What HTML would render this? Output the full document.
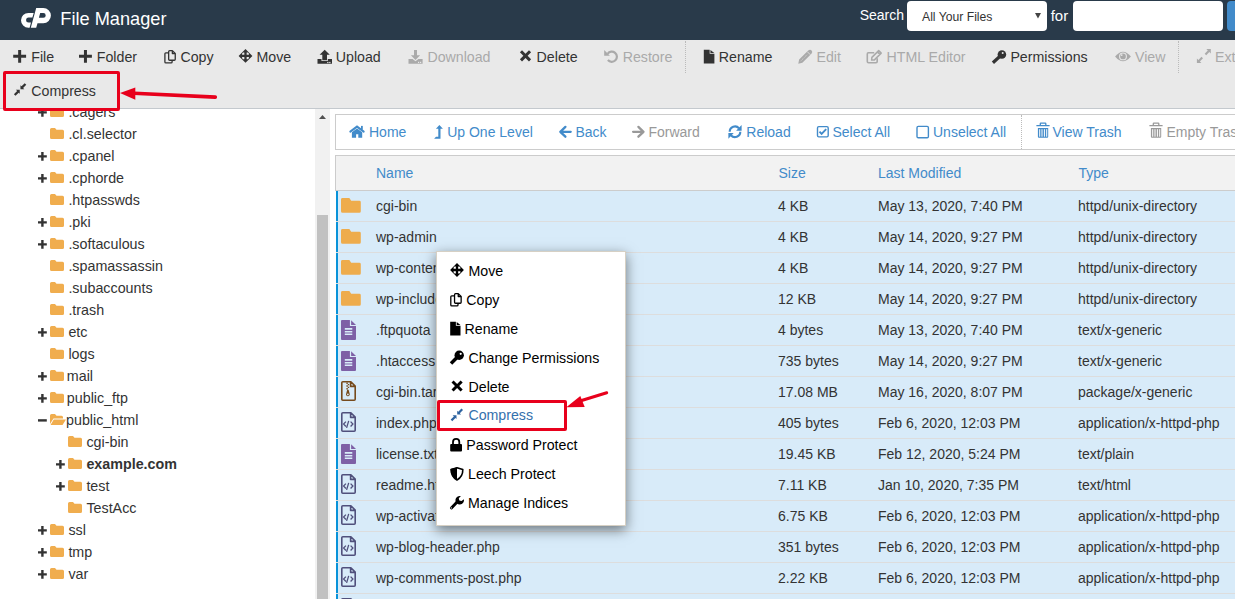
<!DOCTYPE html><html><head><meta charset="utf-8"><style>
html,body{margin:0;padding:0}
body{width:1235px;height:599px;overflow:hidden;position:relative;font-family:"Liberation Sans",sans-serif;background:#fff}
.t{position:absolute;white-space:nowrap;line-height:1}
.i{position:absolute;overflow:visible}
.abs{position:absolute}
</style></head><body>
<svg class="i" style="left:38px;top:108.0px;width:8.8px;height:8.8px;color:#333" viewBox="0 0 8.8 8.8" fill="#333"><path d="M3.2 0h2.4v3.2h3.2v2.4H5.6v3.2H3.2V5.6H0V3.2h3.2z"/></svg>
<svg class="i" style="left:49.7px;top:106.0px;width:14px;height:11px;color:#f0ad4e" viewBox="0 0 14 11" fill="#f0ad4e"><path d="M0 1.5Q0 0 1.5 0H5l1.5 1.8H12.5Q14 1.8 14 3.3V9.5Q14 11 12.5 11H1.5Q0 11 0 9.5z"/></svg>
<span class="t" style="left:68.40px;top:105.10px;font-size:14.3px;color:#333;font-weight:normal;">.cagers</span>
<svg class="i" style="left:49.7px;top:127.99999999999999px;width:14px;height:11px;color:#f0ad4e" viewBox="0 0 14 11" fill="#f0ad4e"><path d="M0 1.5Q0 0 1.5 0H5l1.5 1.8H12.5Q14 1.8 14 3.3V9.5Q14 11 12.5 11H1.5Q0 11 0 9.5z"/></svg>
<span class="t" style="left:68.40px;top:127.10px;font-size:14.3px;color:#333;font-weight:normal;">.cl.selector</span>
<svg class="i" style="left:38px;top:152.0px;width:8.8px;height:8.8px;color:#333" viewBox="0 0 8.8 8.8" fill="#333"><path d="M3.2 0h2.4v3.2h3.2v2.4H5.6v3.2H3.2V5.6H0V3.2h3.2z"/></svg>
<svg class="i" style="left:49.7px;top:150.0px;width:14px;height:11px;color:#f0ad4e" viewBox="0 0 14 11" fill="#f0ad4e"><path d="M0 1.5Q0 0 1.5 0H5l1.5 1.8H12.5Q14 1.8 14 3.3V9.5Q14 11 12.5 11H1.5Q0 11 0 9.5z"/></svg>
<span class="t" style="left:68.40px;top:149.10px;font-size:14.3px;color:#333;font-weight:normal;">.cpanel</span>
<svg class="i" style="left:38px;top:174.0px;width:8.8px;height:8.8px;color:#333" viewBox="0 0 8.8 8.8" fill="#333"><path d="M3.2 0h2.4v3.2h3.2v2.4H5.6v3.2H3.2V5.6H0V3.2h3.2z"/></svg>
<svg class="i" style="left:49.7px;top:172.0px;width:14px;height:11px;color:#f0ad4e" viewBox="0 0 14 11" fill="#f0ad4e"><path d="M0 1.5Q0 0 1.5 0H5l1.5 1.8H12.5Q14 1.8 14 3.3V9.5Q14 11 12.5 11H1.5Q0 11 0 9.5z"/></svg>
<span class="t" style="left:68.40px;top:171.10px;font-size:14.3px;color:#333;font-weight:normal;">.cphorde</span>
<svg class="i" style="left:49.7px;top:194.0px;width:14px;height:11px;color:#f0ad4e" viewBox="0 0 14 11" fill="#f0ad4e"><path d="M0 1.5Q0 0 1.5 0H5l1.5 1.8H12.5Q14 1.8 14 3.3V9.5Q14 11 12.5 11H1.5Q0 11 0 9.5z"/></svg>
<span class="t" style="left:68.40px;top:193.10px;font-size:14.3px;color:#333;font-weight:normal;">.htpasswds</span>
<svg class="i" style="left:38px;top:218.0px;width:8.8px;height:8.8px;color:#333" viewBox="0 0 8.8 8.8" fill="#333"><path d="M3.2 0h2.4v3.2h3.2v2.4H5.6v3.2H3.2V5.6H0V3.2h3.2z"/></svg>
<svg class="i" style="left:49.7px;top:216.0px;width:14px;height:11px;color:#f0ad4e" viewBox="0 0 14 11" fill="#f0ad4e"><path d="M0 1.5Q0 0 1.5 0H5l1.5 1.8H12.5Q14 1.8 14 3.3V9.5Q14 11 12.5 11H1.5Q0 11 0 9.5z"/></svg>
<span class="t" style="left:68.40px;top:215.10px;font-size:14.3px;color:#333;font-weight:normal;">.pki</span>
<svg class="i" style="left:38px;top:240.0px;width:8.8px;height:8.8px;color:#333" viewBox="0 0 8.8 8.8" fill="#333"><path d="M3.2 0h2.4v3.2h3.2v2.4H5.6v3.2H3.2V5.6H0V3.2h3.2z"/></svg>
<svg class="i" style="left:49.7px;top:238.0px;width:14px;height:11px;color:#f0ad4e" viewBox="0 0 14 11" fill="#f0ad4e"><path d="M0 1.5Q0 0 1.5 0H5l1.5 1.8H12.5Q14 1.8 14 3.3V9.5Q14 11 12.5 11H1.5Q0 11 0 9.5z"/></svg>
<span class="t" style="left:68.40px;top:237.10px;font-size:14.3px;color:#333;font-weight:normal;">.softaculous</span>
<svg class="i" style="left:49.7px;top:260.0px;width:14px;height:11px;color:#f0ad4e" viewBox="0 0 14 11" fill="#f0ad4e"><path d="M0 1.5Q0 0 1.5 0H5l1.5 1.8H12.5Q14 1.8 14 3.3V9.5Q14 11 12.5 11H1.5Q0 11 0 9.5z"/></svg>
<span class="t" style="left:68.40px;top:259.10px;font-size:14.3px;color:#333;font-weight:normal;">.spamassassin</span>
<svg class="i" style="left:49.7px;top:282.0px;width:14px;height:11px;color:#f0ad4e" viewBox="0 0 14 11" fill="#f0ad4e"><path d="M0 1.5Q0 0 1.5 0H5l1.5 1.8H12.5Q14 1.8 14 3.3V9.5Q14 11 12.5 11H1.5Q0 11 0 9.5z"/></svg>
<span class="t" style="left:68.40px;top:281.10px;font-size:14.3px;color:#333;font-weight:normal;">.subaccounts</span>
<svg class="i" style="left:49.7px;top:304.0px;width:14px;height:11px;color:#f0ad4e" viewBox="0 0 14 11" fill="#f0ad4e"><path d="M0 1.5Q0 0 1.5 0H5l1.5 1.8H12.5Q14 1.8 14 3.3V9.5Q14 11 12.5 11H1.5Q0 11 0 9.5z"/></svg>
<span class="t" style="left:68.40px;top:303.10px;font-size:14.3px;color:#333;font-weight:normal;">.trash</span>
<svg class="i" style="left:38px;top:328.0px;width:8.8px;height:8.8px;color:#333" viewBox="0 0 8.8 8.8" fill="#333"><path d="M3.2 0h2.4v3.2h3.2v2.4H5.6v3.2H3.2V5.6H0V3.2h3.2z"/></svg>
<svg class="i" style="left:49.7px;top:326.0px;width:14px;height:11px;color:#f0ad4e" viewBox="0 0 14 11" fill="#f0ad4e"><path d="M0 1.5Q0 0 1.5 0H5l1.5 1.8H12.5Q14 1.8 14 3.3V9.5Q14 11 12.5 11H1.5Q0 11 0 9.5z"/></svg>
<span class="t" style="left:68.40px;top:325.10px;font-size:14.3px;color:#333;font-weight:normal;">etc</span>
<svg class="i" style="left:49.7px;top:348.0px;width:14px;height:11px;color:#f0ad4e" viewBox="0 0 14 11" fill="#f0ad4e"><path d="M0 1.5Q0 0 1.5 0H5l1.5 1.8H12.5Q14 1.8 14 3.3V9.5Q14 11 12.5 11H1.5Q0 11 0 9.5z"/></svg>
<span class="t" style="left:68.40px;top:347.10px;font-size:14.3px;color:#333;font-weight:normal;">logs</span>
<svg class="i" style="left:38px;top:372.0px;width:8.8px;height:8.8px;color:#333" viewBox="0 0 8.8 8.8" fill="#333"><path d="M3.2 0h2.4v3.2h3.2v2.4H5.6v3.2H3.2V5.6H0V3.2h3.2z"/></svg>
<svg class="i" style="left:49.7px;top:370.0px;width:14px;height:11px;color:#f0ad4e" viewBox="0 0 14 11" fill="#f0ad4e"><path d="M0 1.5Q0 0 1.5 0H5l1.5 1.8H12.5Q14 1.8 14 3.3V9.5Q14 11 12.5 11H1.5Q0 11 0 9.5z"/></svg>
<span class="t" style="left:66.80px;top:369.10px;font-size:14.3px;color:#333;font-weight:normal;">mail</span>
<svg class="i" style="left:38px;top:394.0px;width:8.8px;height:8.8px;color:#333" viewBox="0 0 8.8 8.8" fill="#333"><path d="M3.2 0h2.4v3.2h3.2v2.4H5.6v3.2H3.2V5.6H0V3.2h3.2z"/></svg>
<svg class="i" style="left:49.7px;top:392.0px;width:14px;height:11px;color:#f0ad4e" viewBox="0 0 14 11" fill="#f0ad4e"><path d="M0 1.5Q0 0 1.5 0H5l1.5 1.8H12.5Q14 1.8 14 3.3V9.5Q14 11 12.5 11H1.5Q0 11 0 9.5z"/></svg>
<span class="t" style="left:66.80px;top:391.10px;font-size:14.3px;color:#333;font-weight:normal;">public_ftp</span>
<svg class="i" style="left:38px;top:416.0px;width:8.8px;height:8.8px;color:#333" viewBox="0 0 8.8 8.8" fill="#333"><path d="M0 3.2h8.8v2.4H0z"/></svg>
<svg class="i" style="left:50px;top:414.0px;width:16px;height:11px;color:#f0ad4e" viewBox="0 0 16 11" fill="#f0ad4e"><path d="M0 1.5Q0 0 1.5 0H5l1.5 1.8H11.5Q13 1.8 13 3.3V4.5H3.5L0 10z M3.8 5.5H16L12.5 11H0.5z"/></svg>
<span class="t" style="left:66.00px;top:413.10px;font-size:14.3px;color:#333;font-weight:normal;">public_html</span>
<svg class="i" style="left:67.7px;top:436.0px;width:14px;height:11px;color:#f0ad4e" viewBox="0 0 14 11" fill="#f0ad4e"><path d="M0 1.5Q0 0 1.5 0H5l1.5 1.8H12.5Q14 1.8 14 3.3V9.5Q14 11 12.5 11H1.5Q0 11 0 9.5z"/></svg>
<span class="t" style="left:86.40px;top:435.10px;font-size:14.3px;color:#333;font-weight:normal;">cgi-bin</span>
<svg class="i" style="left:56px;top:460.0px;width:8.8px;height:8.8px;color:#333" viewBox="0 0 8.8 8.8" fill="#333"><path d="M3.2 0h2.4v3.2h3.2v2.4H5.6v3.2H3.2V5.6H0V3.2h3.2z"/></svg>
<svg class="i" style="left:67.7px;top:458.0px;width:14px;height:11px;color:#f0ad4e" viewBox="0 0 14 11" fill="#f0ad4e"><path d="M0 1.5Q0 0 1.5 0H5l1.5 1.8H12.5Q14 1.8 14 3.3V9.5Q14 11 12.5 11H1.5Q0 11 0 9.5z"/></svg>
<span class="t" style="left:86.40px;top:457.10px;font-size:14.3px;color:#333;font-weight:bold;">example.com</span>
<svg class="i" style="left:56px;top:482.0px;width:8.8px;height:8.8px;color:#333" viewBox="0 0 8.8 8.8" fill="#333"><path d="M3.2 0h2.4v3.2h3.2v2.4H5.6v3.2H3.2V5.6H0V3.2h3.2z"/></svg>
<svg class="i" style="left:67.7px;top:480.0px;width:14px;height:11px;color:#f0ad4e" viewBox="0 0 14 11" fill="#f0ad4e"><path d="M0 1.5Q0 0 1.5 0H5l1.5 1.8H12.5Q14 1.8 14 3.3V9.5Q14 11 12.5 11H1.5Q0 11 0 9.5z"/></svg>
<span class="t" style="left:86.40px;top:479.10px;font-size:14.3px;color:#333;font-weight:normal;">test</span>
<svg class="i" style="left:67.7px;top:502.00000000000006px;width:14px;height:11px;color:#f0ad4e" viewBox="0 0 14 11" fill="#f0ad4e"><path d="M0 1.5Q0 0 1.5 0H5l1.5 1.8H12.5Q14 1.8 14 3.3V9.5Q14 11 12.5 11H1.5Q0 11 0 9.5z"/></svg>
<span class="t" style="left:86.40px;top:501.10px;font-size:14.3px;color:#333;font-weight:normal;">TestAcc</span>
<svg class="i" style="left:38px;top:526.0px;width:8.8px;height:8.8px;color:#333" viewBox="0 0 8.8 8.8" fill="#333"><path d="M3.2 0h2.4v3.2h3.2v2.4H5.6v3.2H3.2V5.6H0V3.2h3.2z"/></svg>
<svg class="i" style="left:49.7px;top:524.0px;width:14px;height:11px;color:#f0ad4e" viewBox="0 0 14 11" fill="#f0ad4e"><path d="M0 1.5Q0 0 1.5 0H5l1.5 1.8H12.5Q14 1.8 14 3.3V9.5Q14 11 12.5 11H1.5Q0 11 0 9.5z"/></svg>
<span class="t" style="left:68.40px;top:523.10px;font-size:14.3px;color:#333;font-weight:normal;">ssl</span>
<svg class="i" style="left:38px;top:548.0px;width:8.8px;height:8.8px;color:#333" viewBox="0 0 8.8 8.8" fill="#333"><path d="M3.2 0h2.4v3.2h3.2v2.4H5.6v3.2H3.2V5.6H0V3.2h3.2z"/></svg>
<svg class="i" style="left:49.7px;top:546.0px;width:14px;height:11px;color:#f0ad4e" viewBox="0 0 14 11" fill="#f0ad4e"><path d="M0 1.5Q0 0 1.5 0H5l1.5 1.8H12.5Q14 1.8 14 3.3V9.5Q14 11 12.5 11H1.5Q0 11 0 9.5z"/></svg>
<span class="t" style="left:68.40px;top:545.10px;font-size:14.3px;color:#333;font-weight:normal;">tmp</span>
<svg class="i" style="left:38px;top:570.0px;width:8.8px;height:8.8px;color:#333" viewBox="0 0 8.8 8.8" fill="#333"><path d="M3.2 0h2.4v3.2h3.2v2.4H5.6v3.2H3.2V5.6H0V3.2h3.2z"/></svg>
<svg class="i" style="left:49.7px;top:568.0px;width:14px;height:11px;color:#f0ad4e" viewBox="0 0 14 11" fill="#f0ad4e"><path d="M0 1.5Q0 0 1.5 0H5l1.5 1.8H12.5Q14 1.8 14 3.3V9.5Q14 11 12.5 11H1.5Q0 11 0 9.5z"/></svg>
<span class="t" style="left:68.40px;top:567.10px;font-size:14.3px;color:#333;font-weight:normal;">var</span>
<div class="abs" style="left:315px;top:109px;width:15px;height:490px;background:#f1f1f1"></div>
<svg class="i" style="left:319px;top:114.8px;width:7px;height:4px" viewBox="0 0 7 4" fill="#505050"><path d="M0 4L3.5 0 7 4z"/></svg>
<div class="abs" style="left:317px;top:215px;width:11px;height:384px;background:#c1c1c1"></div>
<div class="abs" style="left:335px;top:114px;width:1000px;height:34px;border:1px solid #ccc;background:#fff"></div>
<span class="t" style="left:369.00px;top:124.85px;font-size:14px;color:#428bca;font-weight:normal;">Home</span>
<span class="t" style="left:447.20px;top:124.85px;font-size:14px;color:#428bca;font-weight:normal;">Up One Level</span>
<span class="t" style="left:575.50px;top:124.85px;font-size:14px;color:#428bca;font-weight:normal;">Back</span>
<span class="t" style="left:648.40px;top:124.85px;font-size:14px;color:#999;font-weight:normal;">Forward</span>
<span class="t" style="left:746.30px;top:124.85px;font-size:14px;color:#428bca;font-weight:normal;">Reload</span>
<span class="t" style="left:832.50px;top:124.85px;font-size:14px;color:#428bca;font-weight:normal;">Select All</span>
<span class="t" style="left:933.00px;top:124.85px;font-size:14px;color:#428bca;font-weight:normal;">Unselect All</span>
<div class="abs" style="left:1021px;top:115px;width:0;height:34px;border-left:1px dotted #bbb"></div>
<span class="t" style="left:1052.50px;top:124.85px;font-size:14px;color:#428bca;font-weight:normal;">View Trash</span>
<span class="t" style="left:1166.40px;top:124.85px;font-size:14px;color:#999;font-weight:normal;">Empty Trash</span>
<svg class="i" style="left:0;top:0;width:1235px;height:599px" viewBox="0 0 1235 599"><path fill="none" stroke="#428bca" stroke-width="2" stroke-linecap="round" d="M350.30 131.60L357.00 126.60L363.70 131.60"/><rect fill="#428bca" x="361.00" y="125.90" width="1.8" height="3.8"/><path fill="#428bca" d="M351.90 132.30L357.00 128.50L362.20 132.30V137.80H358.30V134.20H356.10V137.80H351.90Z"/><path fill="#428bca" d="M439.40 125.10L442.90 128.80H440.50V138.75H434.10L436.00 136.70H438.30V128.80H435.90Z"/><path fill="none" stroke="#428bca" stroke-width="2.3" stroke-linecap="round" stroke-linejoin="round" d="M565.40 126.90L560.30 131.80L565.40 136.70M560.50 131.80H570.70"/><path fill="none" stroke="#999" stroke-width="2.3" stroke-linecap="round" stroke-linejoin="round" d="M638.40 126.90L643.50 131.80L638.40 136.70M643.30 131.80H633.10"/><path fill="none" stroke="#428bca" stroke-width="2.1" d="M729.70 131.80A5.3 5.3 0 0 1 739.06 128.39"/><path fill="none" stroke="#428bca" stroke-width="2.1" d="M740.30 131.80A5.3 5.3 0 0 1 730.94 135.21"/><path fill="#428bca" d="M741.60 130.70H736.10L741.60 125.10Z"/><path fill="#428bca" d="M728.40 132.90H733.70L728.40 138.75Z"/><rect fill="none" stroke="#428bca" stroke-width="1.4" x="817.50" y="126.60" width="10.7" height="10.3" rx="1.3"/><path fill="none" stroke="#428bca" stroke-width="1.9" d="M819.50 131.70L821.60 133.90L826.20 129.20"/><rect fill="none" stroke="#428bca" stroke-width="1.4" x="917.00" y="126.40" width="11.4" height="11.4" rx="1.3"/><path fill="none" stroke="#428bca" stroke-width="1.3" d="M1036.40 125.60H1049.60M1040.30 125.60V123.70Q1040.30 123.10 1040.90 123.10H1045.20Q1045.80 123.10 1045.80 123.70V125.60"/><path fill="#428bca" d="M1037.90 127.90H1048.20V136.80Q1048.20 137.80 1047.20 137.80H1038.90Q1037.90 137.80 1037.90 136.80Z"/><rect fill="#fff" x="1039.20" y="129.20" width="1.0" height="7.5"/><rect fill="#fff" x="1041.50" y="129.20" width="1.0" height="7.5"/><rect fill="#fff" x="1043.90" y="129.20" width="1.0" height="7.5"/><rect fill="#fff" x="1046.20" y="129.20" width="1.0" height="7.5"/><path fill="none" stroke="#999" stroke-width="1.3" d="M1149.40 125.60H1162.60M1153.30 125.60V123.70Q1153.30 123.10 1153.90 123.10H1158.20Q1158.80 123.10 1158.80 123.70V125.60"/><path fill="#999" d="M1150.90 127.90H1161.20V136.80Q1161.20 137.80 1160.20 137.80H1151.90Q1150.90 137.80 1150.90 136.80Z"/><rect fill="#fff" x="1152.20" y="129.20" width="1.0" height="7.5"/><rect fill="#fff" x="1154.50" y="129.20" width="1.0" height="7.5"/><rect fill="#fff" x="1156.90" y="129.20" width="1.0" height="7.5"/><rect fill="#fff" x="1159.20" y="129.20" width="1.0" height="7.5"/></svg>
<div class="abs" style="left:335px;top:155px;width:1000px;height:34px;background:#f2f2f2;border:1px solid #ccc;border-bottom:1px solid #ccc"></div>
<span class="t" style="left:376.00px;top:165.95px;font-size:14px;color:#428bca;font-weight:normal;">Name</span>
<span class="t" style="left:778.50px;top:165.95px;font-size:14px;color:#428bca;font-weight:normal;">Size</span>
<span class="t" style="left:878.00px;top:165.95px;font-size:14px;color:#428bca;font-weight:normal;">Last Modified</span>
<span class="t" style="left:1078.50px;top:165.95px;font-size:14px;color:#428bca;font-weight:normal;">Type</span>
<div class="abs" style="left:336px;top:191px;width:1000px;height:30px;background:#d8ebf9;border-bottom:1px solid #ddd"></div>
<div class="abs" style="left:336px;top:191px;width:2px;height:30px;background:#0993d9"></div>
<svg class="i" style="left:341px;top:198px;width:19.8px;height:14.8px;color:#eeac4c" viewBox="0 0 19.8 14.8" fill="#eeac4c"><path d="M0 1.5Q0 0 1.5 0H8.35L10.2 2.7H18.3Q19.8 2.7 19.8 4.2V13.3Q19.8 14.8 18.3 14.8H1.5Q0 14.8 0 13.3z"/></svg>
<span class="t" style="left:376.00px;top:198.95px;font-size:14px;color:#333;font-weight:normal;">cgi-bin</span>
<span class="t" style="left:778.00px;top:198.95px;font-size:14px;color:#333;font-weight:normal;">4 KB</span>
<span class="t" style="left:878.00px;top:198.95px;font-size:14px;color:#333;font-weight:normal;">May 13, 2020, 7:40 PM</span>
<span class="t" style="left:1078.00px;top:198.95px;font-size:14px;color:#333;font-weight:normal;">httpd/unix-directory</span>
<div class="abs" style="left:336px;top:222px;width:1000px;height:30px;background:#d8ebf9;border-bottom:1px solid #ddd"></div>
<div class="abs" style="left:336px;top:222px;width:2px;height:30px;background:#0993d9"></div>
<svg class="i" style="left:341px;top:229px;width:19.8px;height:14.8px;color:#eeac4c" viewBox="0 0 19.8 14.8" fill="#eeac4c"><path d="M0 1.5Q0 0 1.5 0H8.35L10.2 2.7H18.3Q19.8 2.7 19.8 4.2V13.3Q19.8 14.8 18.3 14.8H1.5Q0 14.8 0 13.3z"/></svg>
<span class="t" style="left:376.00px;top:229.95px;font-size:14px;color:#333;font-weight:normal;">wp-admin</span>
<span class="t" style="left:778.00px;top:229.95px;font-size:14px;color:#333;font-weight:normal;">4 KB</span>
<span class="t" style="left:878.00px;top:229.95px;font-size:14px;color:#333;font-weight:normal;">May 14, 2020, 9:27 PM</span>
<span class="t" style="left:1078.00px;top:229.95px;font-size:14px;color:#333;font-weight:normal;">httpd/unix-directory</span>
<div class="abs" style="left:336px;top:253px;width:1000px;height:30px;background:#d8ebf9;border-bottom:1px solid #ddd"></div>
<div class="abs" style="left:336px;top:253px;width:2px;height:30px;background:#0993d9"></div>
<svg class="i" style="left:341px;top:260px;width:19.8px;height:14.8px;color:#eeac4c" viewBox="0 0 19.8 14.8" fill="#eeac4c"><path d="M0 1.5Q0 0 1.5 0H8.35L10.2 2.7H18.3Q19.8 2.7 19.8 4.2V13.3Q19.8 14.8 18.3 14.8H1.5Q0 14.8 0 13.3z"/></svg>
<span class="t" style="left:376.00px;top:260.95px;font-size:14px;color:#333;font-weight:normal;">wp-content</span>
<span class="t" style="left:778.00px;top:260.95px;font-size:14px;color:#333;font-weight:normal;">4 KB</span>
<span class="t" style="left:878.00px;top:260.95px;font-size:14px;color:#333;font-weight:normal;">May 14, 2020, 9:27 PM</span>
<span class="t" style="left:1078.00px;top:260.95px;font-size:14px;color:#333;font-weight:normal;">httpd/unix-directory</span>
<div class="abs" style="left:336px;top:284px;width:1000px;height:30px;background:#d8ebf9;border-bottom:1px solid #ddd"></div>
<div class="abs" style="left:336px;top:284px;width:2px;height:30px;background:#0993d9"></div>
<svg class="i" style="left:341px;top:291px;width:19.8px;height:14.8px;color:#eeac4c" viewBox="0 0 19.8 14.8" fill="#eeac4c"><path d="M0 1.5Q0 0 1.5 0H8.35L10.2 2.7H18.3Q19.8 2.7 19.8 4.2V13.3Q19.8 14.8 18.3 14.8H1.5Q0 14.8 0 13.3z"/></svg>
<span class="t" style="left:376.00px;top:291.95px;font-size:14px;color:#333;font-weight:normal;">wp-includes</span>
<span class="t" style="left:778.00px;top:291.95px;font-size:14px;color:#333;font-weight:normal;">12 KB</span>
<span class="t" style="left:878.00px;top:291.95px;font-size:14px;color:#333;font-weight:normal;">May 14, 2020, 9:27 PM</span>
<span class="t" style="left:1078.00px;top:291.95px;font-size:14px;color:#333;font-weight:normal;">httpd/unix-directory</span>
<div class="abs" style="left:336px;top:315px;width:1000px;height:30px;background:#d8ebf9;border-bottom:1px solid #ddd"></div>
<div class="abs" style="left:336px;top:315px;width:2px;height:30px;background:#0993d9"></div>
<svg class="i" style="left:341px;top:319.7px;width:15px;height:20.1px;color:#7e60a6" viewBox="0 0 15 20.1" fill="#7e60a6"><path d="M0 1Q0 0 1 0H8.9V5.9H15V19.1Q15 20.1 14 20.1H1Q0 20.1 0 19.1z"/><path d="M10.1 0.3L15 4.9H10.1z"/><path d="M3.8 8.9h7.5M3.8 11.7h7.5M3.8 14.3h7.5" stroke="#d8ebf9" stroke-width="1.6"/></svg>
<span class="t" style="left:376.00px;top:322.95px;font-size:14px;color:#333;font-weight:normal;">.ftpquota</span>
<span class="t" style="left:778.00px;top:322.95px;font-size:14px;color:#333;font-weight:normal;">4 bytes</span>
<span class="t" style="left:878.00px;top:322.95px;font-size:14px;color:#333;font-weight:normal;">May 13, 2020, 7:40 PM</span>
<span class="t" style="left:1078.00px;top:322.95px;font-size:14px;color:#333;font-weight:normal;">text/x-generic</span>
<div class="abs" style="left:336px;top:346px;width:1000px;height:30px;background:#d8ebf9;border-bottom:1px solid #ddd"></div>
<div class="abs" style="left:336px;top:346px;width:2px;height:30px;background:#0993d9"></div>
<svg class="i" style="left:341px;top:350.7px;width:15px;height:20.1px;color:#7e60a6" viewBox="0 0 15 20.1" fill="#7e60a6"><path d="M0 1Q0 0 1 0H8.9V5.9H15V19.1Q15 20.1 14 20.1H1Q0 20.1 0 19.1z"/><path d="M10.1 0.3L15 4.9H10.1z"/><path d="M3.8 8.9h7.5M3.8 11.7h7.5M3.8 14.3h7.5" stroke="#d8ebf9" stroke-width="1.6"/></svg>
<span class="t" style="left:376.00px;top:353.95px;font-size:14px;color:#333;font-weight:normal;">.htaccess</span>
<span class="t" style="left:778.00px;top:353.95px;font-size:14px;color:#333;font-weight:normal;">735 bytes</span>
<span class="t" style="left:878.00px;top:353.95px;font-size:14px;color:#333;font-weight:normal;">May 14, 2020, 9:27 PM</span>
<span class="t" style="left:1078.00px;top:353.95px;font-size:14px;color:#333;font-weight:normal;">text/x-generic</span>
<div class="abs" style="left:336px;top:377px;width:1000px;height:30px;background:#d8ebf9;border-bottom:1px solid #ddd"></div>
<div class="abs" style="left:336px;top:377px;width:2px;height:30px;background:#0993d9"></div>
<svg class="i" style="left:341px;top:380.9px;width:15px;height:20.1px;color:#764a1c" viewBox="0 0 15 20.1" fill="#764a1c"><path fill="none" stroke="currentColor" stroke-width="1.6" stroke-linejoin="round" d="M1.8 0.8H9.9L14.2 5.1V18.3Q14.2 19.3 13.2 19.3H1.8Q0.8 19.3 0.8 18.3V1.8Q0.8 0.8 1.8 0.8z M9.6 0.8V5.4H14.2"/><path d="M5.4 1.5h1.4v1.4H5.4zM6.8 2.9h1.4v1.4H6.8zM5.4 4.3h1.4v1.4H5.4zM6.8 5.7h1.4v1.4H6.8zM5.4 7.1h1.4v1.4H5.4zM6.2 8.8h1.4L8.6 12.5A1.9 1.9 0 1 1 5.2 12.5z"/><circle cx="6.9" cy="13.4" r="0.9" fill="#d8ebf9"/></svg>
<span class="t" style="left:376.00px;top:384.95px;font-size:14px;color:#333;font-weight:normal;">cgi-bin.tar.gz</span>
<span class="t" style="left:778.00px;top:384.95px;font-size:14px;color:#333;font-weight:normal;">17.08 MB</span>
<span class="t" style="left:878.00px;top:384.95px;font-size:14px;color:#333;font-weight:normal;">May 16, 2020, 8:07 PM</span>
<span class="t" style="left:1078.00px;top:384.95px;font-size:14px;color:#333;font-weight:normal;">package/x-generic</span>
<div class="abs" style="left:336px;top:408px;width:1000px;height:30px;background:#d8ebf9;border-bottom:1px solid #ddd"></div>
<div class="abs" style="left:336px;top:408px;width:2px;height:30px;background:#0993d9"></div>
<svg class="i" style="left:341px;top:411.9px;width:15px;height:20.1px;color:#50507c" viewBox="0 0 15 20.1" fill="#50507c"><path fill="none" stroke="currentColor" stroke-width="1.6" stroke-linejoin="round" d="M1.8 0.8H9.9L14.2 5.1V18.3Q14.2 19.3 13.2 19.3H1.8Q0.8 19.3 0.8 18.3V1.8Q0.8 0.8 1.8 0.8z M9.6 0.8V5.4H14.2"/><path fill="none" stroke="currentColor" stroke-width="1.3" d="M4.9 9.6L2.6 12.05 4.9 14.5M9.6 9.6L11.9 12.05 9.6 14.5M7.7 8.9L5.6 15.9"/></svg>
<span class="t" style="left:376.00px;top:415.95px;font-size:14px;color:#333;font-weight:normal;">index.php</span>
<span class="t" style="left:778.00px;top:415.95px;font-size:14px;color:#333;font-weight:normal;">405 bytes</span>
<span class="t" style="left:878.00px;top:415.95px;font-size:14px;color:#333;font-weight:normal;">Feb 6, 2020, 12:03 PM</span>
<span class="t" style="left:1078.00px;top:415.95px;font-size:14px;color:#333;font-weight:normal;">application/x-httpd-php</span>
<div class="abs" style="left:336px;top:439px;width:1000px;height:30px;background:#d8ebf9;border-bottom:1px solid #ddd"></div>
<div class="abs" style="left:336px;top:439px;width:2px;height:30px;background:#0993d9"></div>
<svg class="i" style="left:341px;top:443.7px;width:15px;height:20.1px;color:#7e60a6" viewBox="0 0 15 20.1" fill="#7e60a6"><path d="M0 1Q0 0 1 0H8.9V5.9H15V19.1Q15 20.1 14 20.1H1Q0 20.1 0 19.1z"/><path d="M10.1 0.3L15 4.9H10.1z"/><path d="M3.8 8.9h7.5M3.8 11.7h7.5M3.8 14.3h7.5" stroke="#d8ebf9" stroke-width="1.6"/></svg>
<span class="t" style="left:376.00px;top:446.95px;font-size:14px;color:#333;font-weight:normal;">license.txt</span>
<span class="t" style="left:778.00px;top:446.95px;font-size:14px;color:#333;font-weight:normal;">19.45 KB</span>
<span class="t" style="left:878.00px;top:446.95px;font-size:14px;color:#333;font-weight:normal;">Feb 12, 2020, 5:24 PM</span>
<span class="t" style="left:1078.00px;top:446.95px;font-size:14px;color:#333;font-weight:normal;">text/plain</span>
<div class="abs" style="left:336px;top:470px;width:1000px;height:30px;background:#d8ebf9;border-bottom:1px solid #ddd"></div>
<div class="abs" style="left:336px;top:470px;width:2px;height:30px;background:#0993d9"></div>
<svg class="i" style="left:341px;top:473.9px;width:15px;height:20.1px;color:#50507c" viewBox="0 0 15 20.1" fill="#50507c"><path fill="none" stroke="currentColor" stroke-width="1.6" stroke-linejoin="round" d="M1.8 0.8H9.9L14.2 5.1V18.3Q14.2 19.3 13.2 19.3H1.8Q0.8 19.3 0.8 18.3V1.8Q0.8 0.8 1.8 0.8z M9.6 0.8V5.4H14.2"/><path fill="none" stroke="currentColor" stroke-width="1.3" d="M4.9 9.6L2.6 12.05 4.9 14.5M9.6 9.6L11.9 12.05 9.6 14.5M7.7 8.9L5.6 15.9"/></svg>
<span class="t" style="left:376.00px;top:477.95px;font-size:14px;color:#333;font-weight:normal;">readme.html</span>
<span class="t" style="left:778.00px;top:477.95px;font-size:14px;color:#333;font-weight:normal;">7.11 KB</span>
<span class="t" style="left:878.00px;top:477.95px;font-size:14px;color:#333;font-weight:normal;">Jan 10, 2020, 7:35 PM</span>
<span class="t" style="left:1078.00px;top:477.95px;font-size:14px;color:#333;font-weight:normal;">text/html</span>
<div class="abs" style="left:336px;top:501px;width:1000px;height:30px;background:#d8ebf9;border-bottom:1px solid #ddd"></div>
<div class="abs" style="left:336px;top:501px;width:2px;height:30px;background:#0993d9"></div>
<svg class="i" style="left:341px;top:504.9px;width:15px;height:20.1px;color:#50507c" viewBox="0 0 15 20.1" fill="#50507c"><path fill="none" stroke="currentColor" stroke-width="1.6" stroke-linejoin="round" d="M1.8 0.8H9.9L14.2 5.1V18.3Q14.2 19.3 13.2 19.3H1.8Q0.8 19.3 0.8 18.3V1.8Q0.8 0.8 1.8 0.8z M9.6 0.8V5.4H14.2"/><path fill="none" stroke="currentColor" stroke-width="1.3" d="M4.9 9.6L2.6 12.05 4.9 14.5M9.6 9.6L11.9 12.05 9.6 14.5M7.7 8.9L5.6 15.9"/></svg>
<span class="t" style="left:376.00px;top:508.95px;font-size:14px;color:#333;font-weight:normal;">wp-activate.php</span>
<span class="t" style="left:778.00px;top:508.95px;font-size:14px;color:#333;font-weight:normal;">6.75 KB</span>
<span class="t" style="left:878.00px;top:508.95px;font-size:14px;color:#333;font-weight:normal;">Feb 6, 2020, 12:03 PM</span>
<span class="t" style="left:1078.00px;top:508.95px;font-size:14px;color:#333;font-weight:normal;">application/x-httpd-php</span>
<div class="abs" style="left:336px;top:532px;width:1000px;height:30px;background:#d8ebf9;border-bottom:1px solid #ddd"></div>
<div class="abs" style="left:336px;top:532px;width:2px;height:30px;background:#0993d9"></div>
<svg class="i" style="left:341px;top:535.9px;width:15px;height:20.1px;color:#50507c" viewBox="0 0 15 20.1" fill="#50507c"><path fill="none" stroke="currentColor" stroke-width="1.6" stroke-linejoin="round" d="M1.8 0.8H9.9L14.2 5.1V18.3Q14.2 19.3 13.2 19.3H1.8Q0.8 19.3 0.8 18.3V1.8Q0.8 0.8 1.8 0.8z M9.6 0.8V5.4H14.2"/><path fill="none" stroke="currentColor" stroke-width="1.3" d="M4.9 9.6L2.6 12.05 4.9 14.5M9.6 9.6L11.9 12.05 9.6 14.5M7.7 8.9L5.6 15.9"/></svg>
<span class="t" style="left:376.00px;top:539.95px;font-size:14px;color:#333;font-weight:normal;">wp-blog-header.php</span>
<span class="t" style="left:778.00px;top:539.95px;font-size:14px;color:#333;font-weight:normal;">351 bytes</span>
<span class="t" style="left:878.00px;top:539.95px;font-size:14px;color:#333;font-weight:normal;">Feb 6, 2020, 12:03 PM</span>
<span class="t" style="left:1078.00px;top:539.95px;font-size:14px;color:#333;font-weight:normal;">application/x-httpd-php</span>
<div class="abs" style="left:336px;top:563px;width:1000px;height:30px;background:#d8ebf9;border-bottom:1px solid #ddd"></div>
<div class="abs" style="left:336px;top:563px;width:2px;height:30px;background:#0993d9"></div>
<svg class="i" style="left:341px;top:566.9px;width:15px;height:20.1px;color:#50507c" viewBox="0 0 15 20.1" fill="#50507c"><path fill="none" stroke="currentColor" stroke-width="1.6" stroke-linejoin="round" d="M1.8 0.8H9.9L14.2 5.1V18.3Q14.2 19.3 13.2 19.3H1.8Q0.8 19.3 0.8 18.3V1.8Q0.8 0.8 1.8 0.8z M9.6 0.8V5.4H14.2"/><path fill="none" stroke="currentColor" stroke-width="1.3" d="M4.9 9.6L2.6 12.05 4.9 14.5M9.6 9.6L11.9 12.05 9.6 14.5M7.7 8.9L5.6 15.9"/></svg>
<span class="t" style="left:376.00px;top:570.95px;font-size:14px;color:#333;font-weight:normal;">wp-comments-post.php</span>
<span class="t" style="left:778.00px;top:570.95px;font-size:14px;color:#333;font-weight:normal;">2.22 KB</span>
<span class="t" style="left:878.00px;top:570.95px;font-size:14px;color:#333;font-weight:normal;">Feb 6, 2020, 12:03 PM</span>
<span class="t" style="left:1078.00px;top:570.95px;font-size:14px;color:#333;font-weight:normal;">application/x-httpd-php</span>
<div class="abs" style="left:336px;top:594px;width:1000px;height:30px;background:#d8ebf9;border-bottom:1px solid #ddd"></div>
<div class="abs" style="left:336px;top:594px;width:2px;height:30px;background:#0993d9"></div>
<svg class="i" style="left:341px;top:597.9px;width:15px;height:20.1px;color:#50507c" viewBox="0 0 15 20.1" fill="#50507c"><path fill="none" stroke="currentColor" stroke-width="1.6" stroke-linejoin="round" d="M1.8 0.8H9.9L14.2 5.1V18.3Q14.2 19.3 13.2 19.3H1.8Q0.8 19.3 0.8 18.3V1.8Q0.8 0.8 1.8 0.8z M9.6 0.8V5.4H14.2"/><path fill="none" stroke="currentColor" stroke-width="1.3" d="M4.9 9.6L2.6 12.05 4.9 14.5M9.6 9.6L11.9 12.05 9.6 14.5M7.7 8.9L5.6 15.9"/></svg>
<span class="t" style="left:376.00px;top:601.95px;font-size:14px;color:#333;font-weight:normal;">wp-config-sample.php</span>
<span class="t" style="left:778.00px;top:601.95px;font-size:14px;color:#333;font-weight:normal;">3.18 KB</span>
<span class="t" style="left:878.00px;top:601.95px;font-size:14px;color:#333;font-weight:normal;">Feb 6, 2020, 12:03 PM</span>
<span class="t" style="left:1078.00px;top:601.95px;font-size:14px;color:#333;font-weight:normal;">application/x-httpd-php</span>
<div class="abs" style="left:0;top:0;width:1235px;height:40px;background:#293a4a"></div>
<svg class="i" style="left:17px;top:4px;width:40px;height:28px" viewBox="0 0 40 28" fill="#fff"><path d="M16.7 8.9H11.45A7.45 7.45 0 0 0 11.45 23.8H12.6L14.0 18.5H11.6A2.5 2.5 0 0 1 11.6 13.5H15.4Z"/><path fill-rule="evenodd" d="M19.2 4H26.3A7.6 7.6 0 0 1 26.3 19.2H20.5L19.2 23.8H13.8Z M23.2 9.1H26.35A2.35 2.35 0 0 1 26.35 13.8H21.9Z"/></svg>
<span class="t" style="left:60.30px;top:9.79px;font-size:18.2px;color:#fff;font-weight:normal;">File Manager</span>
<span class="t" style="left:859.70px;top:8.35px;font-size:14px;color:#fff;font-weight:normal;">Search</span>
<div class="abs" style="left:907px;top:1px;width:140px;height:30px;background:#fff;border-radius:4px"></div>
<span class="t" style="left:922.00px;top:10.67px;font-size:12.2px;color:#333;font-weight:normal;">All Your Files</span>
<svg class="i" style="left:1035px;top:13px;width:6px;height:5.6px" viewBox="0 0 6 5.6" fill="#444"><path d="M0 0h6L3 5.6z"/></svg>
<span class="t" style="left:1050.70px;top:7.50px;font-size:15px;color:#fff;font-weight:normal;">for</span>
<div class="abs" style="left:1073px;top:1px;width:150px;height:30px;background:#fff;border-radius:4px"></div>
<div class="abs" style="left:1227px;top:1px;width:20px;height:30px;background:#428bca;border-radius:4px"></div>
<div class="abs" style="left:0;top:40px;width:1235px;height:68px;background:#e9e9e9;border-bottom:1px solid #c4c9ce"></div>
<span class="t" style="left:31.30px;top:49.98px;font-size:14.2px;color:#333;font-weight:normal;">File</span>
<span class="t" style="left:96.80px;top:49.98px;font-size:14.2px;color:#333;font-weight:normal;">Folder</span>
<span class="t" style="left:180.40px;top:49.98px;font-size:14.2px;color:#333;font-weight:normal;">Copy</span>
<span class="t" style="left:256.50px;top:49.98px;font-size:14.2px;color:#333;font-weight:normal;">Move</span>
<span class="t" style="left:335.80px;top:49.98px;font-size:14.2px;color:#333;font-weight:normal;">Upload</span>
<span class="t" style="left:427.40px;top:49.98px;font-size:14.2px;color:#aaa;font-weight:normal;">Download</span>
<span class="t" style="left:536.60px;top:49.98px;font-size:14.2px;color:#333;font-weight:normal;">Delete</span>
<span class="t" style="left:622.70px;top:49.98px;font-size:14.2px;color:#aaa;font-weight:normal;">Restore</span>
<div class="abs" style="left:685px;top:41px;width:0;height:32px;border-left:1px dotted #bbb"></div>
<span class="t" style="left:718.80px;top:49.98px;font-size:14.2px;color:#333;font-weight:normal;">Rename</span>
<span class="t" style="left:816.50px;top:49.98px;font-size:14.2px;color:#aaa;font-weight:normal;">Edit</span>
<span class="t" style="left:886.50px;top:49.98px;font-size:14.2px;color:#aaa;font-weight:normal;">HTML Editor</span>
<span class="t" style="left:1010.40px;top:49.98px;font-size:14.2px;color:#333;font-weight:normal;">Permissions</span>
<span class="t" style="left:1135.00px;top:49.98px;font-size:14.2px;color:#aaa;font-weight:normal;">View</span>
<div class="abs" style="left:1178px;top:41px;width:0;height:32px;border-left:1px dotted #bbb"></div>
<span class="t" style="left:1215.00px;top:49.98px;font-size:14.2px;color:#aaa;font-weight:normal;">Extract</span>
<span class="t" style="left:31.30px;top:83.98px;font-size:14.2px;color:#333;font-weight:normal;">Compress</span>
<svg class="i" style="left:0;top:0;width:1235px;height:599px" viewBox="0 0 1235 599"><path fill="#333" d="M18.15 50.00h3.00v12.70h-3.00zM13.20 54.85h12.90v3.00h-12.90z"/><path fill="#333" d="M83.95 50.00h3.00v12.70h-3.00zM79.00 54.85h12.90v3.00h-12.90z"/><path fill="none" stroke="#333" stroke-width="1.3" stroke-linejoin="round" d="M168.65 51.65Q168.65 50.65 169.65 50.65H172.35L175.25 53.55V59.25Q175.25 60.25 174.25 60.25H169.65Q168.65 60.25 168.65 59.25ZM172.35 50.65V53.55H175.25M168.65 52.85H165.90Q164.90 52.85 164.90 53.85V61.95Q164.90 62.95 165.90 62.95H171.10Q172.10 62.95 172.10 61.95V60.25"/><path fill="#333" fill-rule="evenodd" d="M245.50 49.00L252.40 55.90L245.50 62.80L238.60 55.90ZM244.35 54.75L242.10 54.75L242.10 53.50L243.10 52.50L244.35 52.50ZM244.35 57.05L242.10 57.05L242.10 58.30L243.10 59.30L244.35 59.30ZM246.65 54.75L248.90 54.75L248.90 53.50L247.90 52.50L246.65 52.50ZM246.65 57.05L248.90 57.05L248.90 58.30L247.90 59.30L246.65 59.30Z"/><path fill="#333" d="M324.70 49.70L329.80 54.80H327.00V60.30H322.30V54.80H319.60Z"/><path fill="#333" d="M317.50 59.00H321.50V61.00H327.80V59.00H332.00V63.80H317.50Z"/><rect fill="#e9e9e9" x="327.20" y="61.90" width="1.3" height="1.2"/><rect fill="#e9e9e9" x="329.20" y="61.90" width="1.3" height="1.2"/><path fill="#aaa" d="M414.00 49.90H417.00V55.20H420.10L415.50 60.00L410.90 55.20H414.00Z"/><path fill="#aaa" d="M408.50 58.90H412.60L415.50 61.30L418.40 58.90H422.60V63.80H408.50Z"/><rect fill="#e9e9e9" x="418.00" y="61.80" width="1.2" height="1.2"/><rect fill="#e9e9e9" x="420.00" y="61.80" width="1.2" height="1.2"/><path fill="#333" d="M519.90 52.32L522.02 50.20L525.50 53.68L528.98 50.20L531.10 52.32L527.62 55.80L531.10 59.28L528.98 61.40L525.50 57.92L522.02 61.40L519.90 59.28L523.38 55.80Z"/><path fill="none" stroke="#aaa" stroke-width="2.2" d="M607.62 53.77A5.1 5.1 0 1 1 607.89 59.98"/><path fill="#aaa" d="M604.20 49.90V55.70H609.90Z"/><path fill="#333" d="M703.80 49.70H709.65V53.85H714.40V63.60H703.80Z"/><path fill="#333" d="M710.45 50.00L714.30 53.05H710.45Z"/><path fill="#aaa" d="M798.30 63.70L799.14 59.60L808.20 50.55Q810.20 49.10 811.60 50.60Q813.00 52.00 811.45 53.80L802.40 62.86Z"/><path stroke="#e9e9e9" stroke-width="0.8" d="M807.20 51.60L810.40 54.80"/><path stroke="#e9e9e9" stroke-width="0.7" stroke-dasharray="1 1" d="M800.60 61.20L807.00 54.80"/><path fill="none" stroke="#aaa" stroke-width="1.6" d="M874.20 52.80H868.30Q867.30 52.80 867.30 54.00V61.60Q867.30 62.80 868.50 62.80H876.00Q877.20 62.80 877.20 61.60V58.20"/><path fill="none" stroke="#aaa" stroke-width="1.5" stroke-linejoin="round" d="M871.60 60.10L871.90 57.40L878.70 50.60L881.20 53.10L874.40 59.90Z M877.40 51.90L879.90 54.40"/><circle fill="#333" cx="1001.90" cy="54.50" r="4.3"/><path fill="#333" d="M1000.82 53.32L991.82 61.52L993.98 63.88L1002.98 55.68Z"/><circle fill="#e9e9e9" cx="1002.70" cy="53.00" r="1.0"/><path fill="#aaa" d="M1115.10 56.40Q1123.00 46.90 1130.90 56.40Q1123.00 65.90 1115.10 56.40Z"/><circle fill="none" stroke="#e9e9e9" stroke-width="1.1" cx="1123.00" cy="56.40" r="3.4"/><circle fill="#e9e9e9" cx="1121.70" cy="55.10" r="0.9"/><path fill="#aaa" d="M1210.80 49.10V53.60L1209.30 52.10L1206.20 55.20L1204.70 53.70L1207.80 50.60L1206.30 49.10Z"/><path fill="#aaa" d="M1196.90 62.90V58.40L1198.40 59.90L1201.50 56.80L1203.00 58.30L1199.90 61.40L1201.40 62.90Z"/><path fill="#333" d="M20.45 89.15L20.45 85.30L21.52 86.37L24.72 83.17L26.28 84.73L23.08 87.93L24.30 89.15ZM19.75 89.85L19.75 93.70L18.68 92.63L15.48 95.83L13.92 94.27L17.12 91.07L15.90 89.85Z"/></svg>
<div class="abs" style="left:436px;top:251px;width:188px;height:273px;background:#fff;border:1px solid #d6d0c4;box-shadow:0 4px 12px rgba(0,0,0,.5)"></div>
<span class="t" style="left:468.50px;top:263.98px;font-size:14.2px;color:#000;font-weight:normal;">Move</span>
<span class="t" style="left:466.30px;top:292.98px;font-size:14.2px;color:#000;font-weight:normal;">Copy</span>
<span class="t" style="left:464.50px;top:321.98px;font-size:14.2px;color:#000;font-weight:normal;">Rename</span>
<span class="t" style="left:468.40px;top:350.98px;font-size:14.2px;color:#000;font-weight:normal;">Change Permissions</span>
<span class="t" style="left:468.50px;top:379.68px;font-size:14.2px;color:#000;font-weight:normal;">Delete</span>
<span class="t" style="left:468.40px;top:408.28px;font-size:14.2px;color:#3470ad;font-weight:normal;">Compress</span>
<span class="t" style="left:466.30px;top:437.78px;font-size:14.2px;color:#000;font-weight:normal;">Password Protect</span>
<span class="t" style="left:468.00px;top:466.58px;font-size:14.2px;color:#000;font-weight:normal;">Leech Protect</span>
<span class="t" style="left:468.00px;top:495.58px;font-size:14.2px;color:#000;font-weight:normal;">Manage Indices</span>
<svg class="i" style="left:0;top:0;width:1235px;height:599px" viewBox="0 0 1235 599"><path fill="#000" fill-rule="evenodd" d="M457.00 263.10L463.90 270.00L457.00 276.90L450.10 270.00ZM455.85 268.85L453.60 268.85L453.60 267.60L454.60 266.60L455.85 266.60ZM455.85 271.15L453.60 271.15L453.60 272.40L454.60 273.40L455.85 273.40ZM458.15 268.85L460.40 268.85L460.40 267.60L459.40 266.60L458.15 266.60ZM458.15 271.15L460.40 271.15L460.40 272.40L459.40 273.40L458.15 273.40Z"/><path fill="none" stroke="#000" stroke-width="1.3" stroke-linejoin="round" d="M454.55 294.65Q454.55 293.65 455.55 293.65H458.25L461.15 296.55V302.25Q461.15 303.25 460.15 303.25H455.55Q454.55 303.25 454.55 302.25ZM458.25 293.65V296.55H461.15M454.55 295.85H451.80Q450.80 295.85 450.80 296.85V304.95Q450.80 305.95 451.80 305.95H457.00Q458.00 305.95 458.00 304.95V303.25"/><path fill="#000" d="M450.20 321.70H455.88V325.85H460.50V335.60H450.20Z"/><path fill="#000" d="M456.68 322.00L460.40 325.05H456.68Z"/><circle fill="#000" cx="459.20" cy="355.30" r="4.7"/><path fill="#000" d="M458.00 354.10L449.80 362.30L452.20 364.70L460.40 356.50Z"/><circle fill="#fff" cx="460.70" cy="353.80" r="1.1"/><path fill="#000" d="M451.50 382.52L453.62 380.40L457.10 383.88L460.58 380.40L462.70 382.52L459.22 386.00L462.70 389.48L460.58 391.60L457.10 388.12L453.62 391.60L451.50 389.48L454.98 386.00Z"/><path fill="#2d63a0" d="M457.20 414.50L457.20 410.65L458.27 411.72L461.47 408.52L463.03 410.08L459.83 413.28L461.05 414.50ZM456.50 415.20L456.50 419.05L455.43 417.98L452.23 421.18L450.67 419.62L453.87 416.42L452.65 415.20Z"/><rect fill="#000" x="450.20" y="444.10" width="11.8" height="7.4" rx="1"/><path fill="none" stroke="#000" stroke-width="1.8" d="M453.00 444.50V442.00A3.1 3.1 0 0 1 459.30 442.00V444.50"/><path fill="none" stroke="#000" stroke-width="1.6" stroke-linejoin="round" d="M457.00 467.80L462.80 469.50Q463.00 476.50 457.00 480.00Q451.00 476.50 451.20 469.50Z"/><path fill="#000" d="M457.00 467.50V480.20Q450.60 476.80 450.40 469.10Z"/><path fill="none" stroke="#000" stroke-width="2.9" stroke-linecap="round" d="M451.40 507.90L457.80 501.20"/><path fill="#000" d="M460.90 496.10A4.3 4.3 0 1 0 463.90 499.20L461.50 501.00L459.30 500.50L458.80 498.30Z"/><circle fill="#fff" cx="451.30" cy="507.90" r="0.55"/></svg>
<div class="abs" style="left:3px;top:71px;width:111px;height:34px;border:3px solid #e8001c;border-radius:2px"></div>
<div class="abs" style="left:437px;top:399.5px;width:123.5px;height:25.5px;border:3px solid #e8001c;border-radius:2px"></div>
<svg class="i" style="left:0;top:0;width:1235px;height:599px" viewBox="0 0 1235 599"><path d="M134 93.3L215.3 97.1" stroke="#e8001c" stroke-width="3.6" stroke-linecap="round"/><path d="M120 92.9L135.3 87.6 135.3 99.7z" fill="#e8001c"/><path d="M580 401L606.7 392.7" stroke="#e8001c" stroke-width="3" stroke-linecap="round"/><path d="M566.3 407.3L580.3 396 584.7 407z" fill="#e8001c"/></svg>
</body></html>
